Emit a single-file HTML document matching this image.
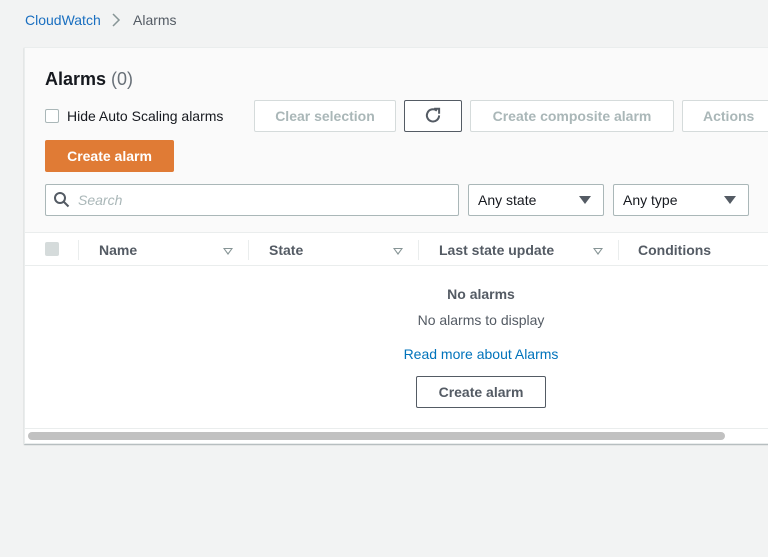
<!DOCTYPE html>
<html><head><style>
*{box-sizing:border-box;margin:0;padding:0}
body{width:768px;height:557px;background:#f2f3f3;font-family:"Liberation Sans",sans-serif;position:relative;overflow:hidden;color:#16191f}
.a{position:absolute}
.btn{position:absolute;border:1px solid #d5dbdb;background:#fff;color:#aab7b8;font-weight:bold;font-size:14px;display:flex;align-items:center;justify-content:center;border-radius:2px}
.sel{position:absolute;border:1px solid #aab7b8;background:#fff;font-size:14px;display:flex;align-items:center;padding-left:9px;border-radius:2px}
.tri{position:absolute;right:12px;top:11px;width:0;height:0;border-left:6px solid transparent;border-right:6px solid transparent;border-top:8px solid #545b64}
.th{position:absolute;top:242px;font-weight:bold;font-size:14px;color:#545b64}
.div{position:absolute;top:240px;width:1px;height:20px;background:#eaeded}
.st{position:absolute;top:248px;width:0;height:0;border-left:5px solid transparent;border-right:5px solid transparent;border-top:7px solid #879596}
.st:after{content:"";position:absolute;left:-3px;top:-6px;border-left:3px solid transparent;border-right:3px solid transparent;border-top:4px solid #fff}
</style></head><body>
<div class="a" style="left:25px;top:12px;font-size:14px;color:#1a6fc0">CloudWatch</div>
<svg class="a" style="left:110px;top:13px" width="12" height="14"><path d="M3 1l6 6-6 6" stroke="#879596" stroke-width="1.5" fill="none"/></svg>
<div class="a" style="left:133px;top:12px;font-size:14px;color:#545b64">Alarms</div>

<div class="a" style="left:24px;top:47px;width:760px;height:397px;background:#fff;border:1px solid #eaeded;box-shadow:0 1px 1px rgba(0,28,36,.3)">
<div class="a" style="left:0;top:0;width:760px;height:185px;background:#fafafa"></div>
</div>
<div class="a" style="left:45px;top:69px;font-size:18px;font-weight:bold">Alarms <span style="font-weight:normal;color:#687078">(0)</span></div>
<div class="a" style="left:45px;top:109px;width:14px;height:14px;border:1px solid #aab7b8;background:#fff;border-radius:2px"></div>
<div class="a" style="left:67px;top:108px;font-size:14px">Hide Auto Scaling alarms</div>
<div class="btn" style="left:254px;top:100px;width:142px;height:32px">Clear selection</div>
<div class="btn" style="left:404px;top:100px;width:58px;height:32px;border-color:#545b64">
<svg width="20" height="20" viewBox="0 0 18 18"><path d="M14.5 8.5A5.5 5.5 0 1 1 12.5 4.2" stroke="#545b64" stroke-width="1.8" fill="none"/><path d="M10 2.5h4.5v4.5" stroke="#545b64" stroke-width="1.8" fill="none"/></svg></div>
<div class="btn" style="left:470px;top:100px;width:204px;height:32px">Create composite alarm</div>
<div class="btn" style="left:682px;top:100px;width:120px;height:32px;justify-content:flex-start;padding-left:20px">Actions</div>
<div class="a" style="left:45px;top:140px;width:129px;height:32px;background:#e07b35;border-radius:2px;color:#fff;font-weight:bold;font-size:14px;display:flex;align-items:center;justify-content:center">Create alarm</div>
<div class="sel" style="left:45px;top:184px;width:414px;height:32px;padding-left:32px;color:#aab7b8;font-style:italic">Search</div>
<svg class="a" style="left:53px;top:191px" width="18" height="18"><circle cx="7" cy="7" r="5" stroke="#545b64" stroke-width="2" fill="none"/><path d="M10.5 10.5l5 5" stroke="#545b64" stroke-width="2"/></svg>
<div class="sel" style="left:468px;top:184px;width:136px;height:32px">Any state<div class="tri"></div></div>
<div class="sel" style="left:613px;top:184px;width:136px;height:32px">Any type<div class="tri"></div></div>

<div class="a" style="left:25px;top:232px;width:743px;height:1px;background:#eaeded"></div>
<div class="a" style="left:25px;top:265px;width:743px;height:1px;background:#eaeded"></div>
<div class="a" style="left:45px;top:242px;width:14px;height:14px;background:#d5dbdb;border-radius:2px"></div>
<div class="div" style="left:78px"></div><div class="div" style="left:248px"></div><div class="div" style="left:418px"></div><div class="div" style="left:618px"></div>
<div class="th" style="left:99px">Name</div><div class="st" style="left:223px"></div>
<div class="th" style="left:269px">State</div><div class="st" style="left:393px"></div>
<div class="th" style="left:439px">Last state update</div><div class="st" style="left:593px"></div>
<div class="th" style="left:638px">Conditions</div>

<div class="a" style="left:381px;top:286px;width:200px;text-align:center;font-weight:bold;font-size:14px;color:#545b64">No alarms</div>
<div class="a" style="left:381px;top:312px;width:200px;text-align:center;font-size:14px;color:#545b64">No alarms to display</div>
<div class="a" style="left:381px;top:346px;width:200px;text-align:center;font-size:14px;color:#0073bb">Read more about Alarms</div>
<div class="a" style="left:416px;top:376px;width:130px;height:32px;border:1px solid #545b64;background:#fff;border-radius:2px;font-weight:bold;font-size:14px;color:#545b64;display:flex;align-items:center;justify-content:center">Create alarm</div>
<div class="a" style="left:25px;top:428px;width:743px;height:1px;background:#eaeded"></div>
<div class="a" style="left:28px;top:432px;width:697px;height:8px;background:#c1c1c1;border-radius:4px"></div>
</body></html>
